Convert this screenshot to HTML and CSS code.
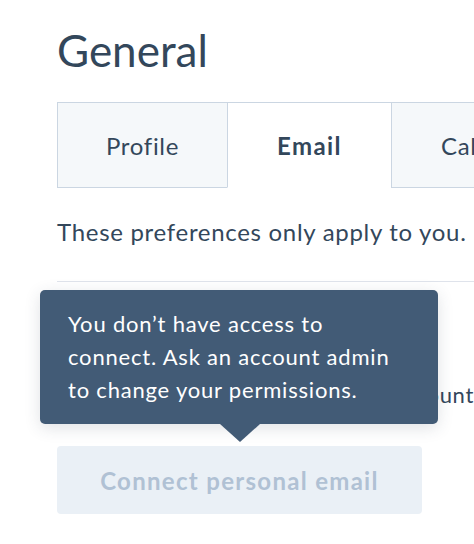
FILE: index.html
```html
<!DOCTYPE html>
<html lang="en">
  <head>
    <meta charset="UTF-8" />
    <meta name="viewport" content="width=device-width, initial-scale=1.0" />
    <title>General settings</title>
    <link rel="stylesheet" href="styles.css">
  </head>
  <body>
    <div class="page">
      <h1 class="title">General</h1>
      <div class="tabs">
        <div class="tab">Profile</div>
        <div class="tab active">Email</div>
        <div class="tab">Calling</div>
      </div>
      <p class="intro">These preferences only apply to you.</p>
      <hr class="divider" />
      <div class="connect">
        <p class="connect-text">Connect your personal email account to log emails</p>
        <button class="connect-btn" disabled>Connect personal email</button>
        <div class="tooltip">
          You don’t have access to connect. Ask an account admin to change your permissions.
        </div>
      </div>
    </div>
  </body>
</html>
```

FILE: styles.css
```css
body {
  margin: 0;
  padding: 0;
  background: white;
  color: #33475b;
  font-family: "Lato", "Noto Sans", sans-serif;
  letter-spacing: 0.7px;
  overflow: hidden;
}
.page {
  padding: 24px 0 0 57px;
}
.title {
  font-size: 44px;
  font-weight: 400;
  margin: 0 0 26px 0;
  line-height: 52px;
  letter-spacing: 0;
}
.tabs {
  display: flex;
  width: 600px;
}
.tab {
  box-sizing: border-box;
  height: 86px;
  display: flex;
  align-items: center;
  justify-content: center;
  font-size: 24px;
  background: #f5f8fa;
  border: 1px solid #cbd6e2;
  border-right: none;
}
.tab:nth-child(1) {
  width: 170px;
}
.tab:nth-child(2) {
  width: 164px;
}
.tab:nth-child(3) {
  width: 170px;
  justify-content: flex-start;
  padding-left: 49px;
}
.tab.active {
  background: white;
  border-bottom-color: white;
  font-weight: 700;
  letter-spacing: 1.4px;
}
.intro {
  font-size: 24px;
  margin: 28px 0 0 0;
  line-height: 32px;
}
.divider {
  border: none;
  border-top: 1px solid #dfe3eb;
  margin: 33px 0 0 0;
}
.connect {
  position: relative;
  padding-top: 98px;
}
.connect-text {
  margin: 0 0 36px 0;
  font-size: 22px;
  line-height: 30px;
  white-space: nowrap;
  text-indent: 36px;
}
.connect-btn {
  width: 365px;
  height: 68px;
  border: none;
  border-radius: 4px;
  background: #eaf0f6;
  color: #b0c1d4;
  font-family: inherit;
  font-size: 24px;
  font-weight: 700;
  letter-spacing: 1.3px;
}
.tooltip {
  position: absolute;
  left: -17px;
  top: 8px;
  width: 398px;
  height: 134px;
  box-sizing: border-box;
  padding: 17px 36px 17px 28px;
  background: #425b76;
  color: white;
  border-radius: 5px;
  font-size: 22px;
  line-height: 33px;
  letter-spacing: 0.8px;
  box-shadow: 0 4px 16px rgba(45, 62, 80, 0.15);
}
.tooltip::after {
  content: "";
  position: absolute;
  left: 180px;
  bottom: -18px;
  border-left: 20px solid transparent;
  border-right: 20px solid transparent;
  border-top: 18px solid #425b76;
}
```
